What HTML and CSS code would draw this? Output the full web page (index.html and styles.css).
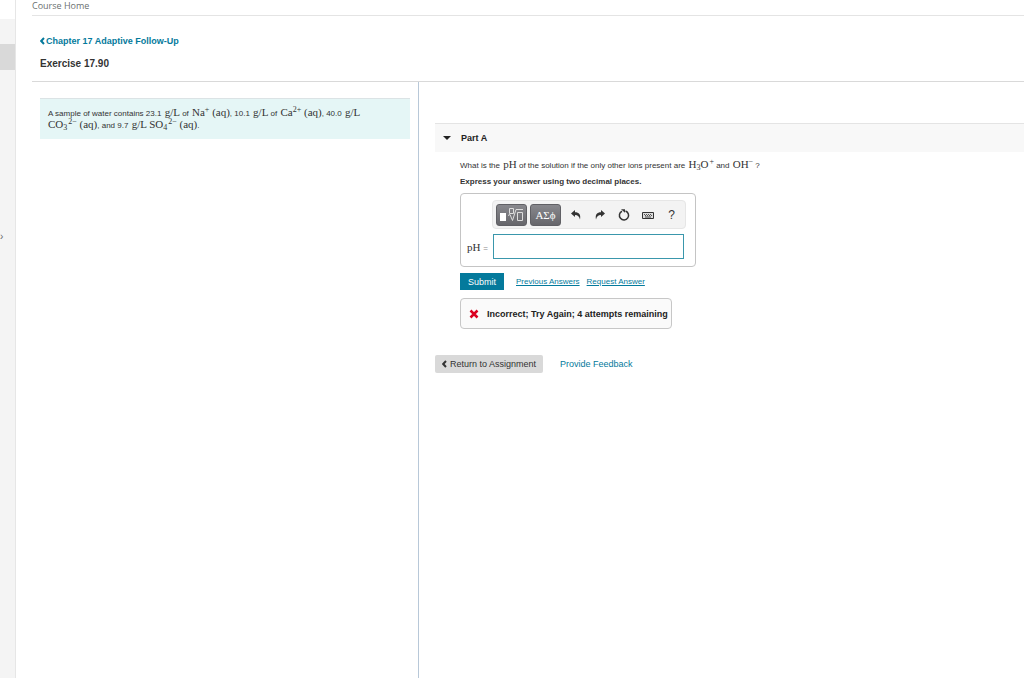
FILE: index.html
```html
<!DOCTYPE html>
<html lang="en">
<head>
<meta charset="utf-8">
<title>Exercise 17.90</title>
<link rel="stylesheet" href="styles.css">
</head>
<body>
<aside class="rail"><div class="rail-top"></div><div class="rail-active"></div><span class="rail-mark">›</span></aside>
<main class="page">
  <nav class="crumbs"><a href="#">Course Home</a></nav>
  <header class="heading">
    <a class="back" href="#"><svg class="chevron" viewBox="0 0 5 8"><path d="M4 1 1.2 4 4 7"/></svg>Chapter 17 Adaptive Follow-Up</a>
    <h1>Exercise 17.90</h1>
  </header>
  <div class="columns">
    <section class="problem">
      <p class="intro">A sample of water contains 23.1 <span class="math">g/L</span> of <span class="math">Na<sup>+</sup> (aq)</span>, 10.1 <span class="math">g/L</span> of <span class="math">Ca<sup>2+</sup> (aq)</span>, 40.0 <span class="math">g/L</span><br><span class="math">CO<sub>3</sub><sup>2−</sup> (aq)</span>, and 9.7 <span class="math">g/L SO<sub>4</sub><sup>2−</sup> (aq)</span>.</p>
    </section>
    <section class="work">
      <h2 class="part"><svg class="caret" viewBox="0 0 8 4"><path d="M0 0h8L4 4z"/></svg>Part A</h2>
      <div class="question">
        <p class="ask">What is the <span class="math">pH</span> of the solution if the only other ions present are <span class="math">H<sub>3</sub>O<sup>+</sup></span> and <span class="math">OH<sup>−</sup></span> ?</p>
        <p class="express">Express your answer using two decimal places.</p>
        <div class="answer">
          <div class="toolbar">
            <button class="dark" aria-label="Templates"><svg width="25" height="18" viewBox="0 0 25 18"><path fill="#fff" d="M1 7h6v8H1z"/><g fill="none" stroke="#ddd"><path d="M10.5 2.5h4v5h-4zM18.5 6.5h5v8h-5zM9 9.5l2-1 2.500 6L17 3.500h7"/></g></svg></button>
            <button class="dark greek">ΑΣϕ</button>
            <button class="tool" aria-label="Undo"><svg viewBox="0 0 12 12"><path class="solid" d="M1 4.500 5 1v2.200c4 0 6 2.200 5 7.300C9.300 7.500 8 6 5 6v2z"/></svg></button>
            <button class="tool" aria-label="Redo"><svg viewBox="0 0 12 12"><path class="solid" d="M11 4.500 7 1v2.200c-4 0-6 2.200-5 7.300C2.700 7.500 4 6 7 6v2z"/></svg></button>
            <button class="tool" aria-label="Reset"><svg viewBox="0 0 12 12"><path class="line" d="M7.500 2A4.600 4.600 0 1 1 4 2.200"/><path class="solid" d="M3 .2h4v3.600z"/></svg></button>
            <button class="tool" aria-label="Keyboard"><svg viewBox="0 0 12 12"><path fill="#ddd" stroke="#333" d="M.5 3.500h11v6H.5z"/><path fill="none" stroke="#555" stroke-dasharray="1 1" d="M2 5.500h8M3 6.500h7"/><path stroke="#444" d="M3 8h6"/></svg></button>
            <button class="tool help" aria-label="Help">?</button>
          </div>
          <div class="entry"><label class="math" for="ph">pH <span class="eq">=</span></label><input id="ph" type="text"></div>
        </div>
        <div class="actions"><button class="submit">Submit</button><a href="#">Previous Answers</a><a href="#">Request Answer</a></div>
        <div class="result"><svg viewBox="0 0 10 10"><path d="M1.500 1.500l7 7M8.500 1.500l-7 7"/></svg>Incorrect; Try Again; 4 attempts remaining</div>
      </div>
      <footer class="foot"><button class="return"><svg class="chevron" viewBox="0 0 5 8"><path d="M4 1 1.200 4 4 7"/></svg>Return to Assignment</button><a href="#">Provide Feedback</a></footer>
    </section>
  </div>
</main>
</body>
</html>
```
FILE: styles.css
```css
* { box-sizing: border-box; }
body { margin: 0; min-height: 100vh; display: flex; background: #fff; color: #333; font: 8px/12px "Liberation Sans", Arial, sans-serif; }
a { color: #047a9c; text-decoration: none; }
h1, h2, p { margin: 0; }
button { font: inherit; border: 0; padding: 0; cursor: pointer; }
svg { display: block; }
.rail { flex: 0 0 16px; background: #f4f4f4; border-right: 1px solid #e6e6e6; }
.rail-top { height: 44px; border-top: 19px solid #fff; }
.rail-active { height: 26px; background: #d9d9d9; }
.rail-mark { display: block; margin-top: 161px; height: 12px; font-size: 10px; color: #666; }
.page { flex: 1; min-width: 0; padding-left: 16px; display: flex; flex-direction: column; }
.crumbs { height: 16px; border-bottom: 1px solid #e4e4e4; font: 9px/12px "Open Sans", sans-serif; }
.crumbs a { color: #6a7070; }
.heading { height: 66px; padding: 19px 8px 0; border-bottom: 1px solid #d9d9d9; }
.back { display: flex; align-items: center; gap: 1px; font-weight: bold; font-size: 9px; }
.chevron { width: 5px; height: 8px; fill: none; stroke: currentColor; stroke-width: 2; }
h1 { margin-top: 11px; font-size: 10px; line-height: 12px; }
.columns { flex: 1; display: flex; }
.problem { flex: 0 0 387px; padding: 16px 8px; border-right: 1px solid #b8c8d8; }
.intro { padding: 9px 8px 7px; min-height: 41px; background: #e5f6f6; border-top: 1px solid #dbe3e5; white-space: nowrap; }
.math { font-family: "Liberation Serif", "Times New Roman", serif; font-size: 11px; line-height: 0; }
.intro .math, .ask .math { margin-left: 1px; }
.intro br + .math { margin-left: 0; }
sub, sup { font-size: 8px; line-height: 0; vertical-align: baseline; position: relative; }
sup { top: -4px; }
sub { top: 2px; }
sub + sup { margin-left: 1px; }
.work { flex: 1; min-width: 0; padding: 41px 0 0 16px; }
.part { height: 29px; padding-left: 8px; display: flex; align-items: center; gap: 10px; background: #f8f8f8; border-top: 1px solid #e4e4e4; font-size: 9px; color: #222; }
.caret { width: 8px; height: 4px; fill: #222; }
.question { padding: 8px 0 0 25px; }
.express { margin-top: 4px; font-weight: bold; }
.answer { max-width: 236px; margin-top: 5px; padding: 6px 9px 7px 6px; border: 1px solid #c4c4c4; border-radius: 4px; }
.toolbar { height: 29px; margin-left: 25px; padding: 0 3px; display: flex; align-items: center; gap: 3px; background: #f3f3f3; border: 1px solid #e6e6e6; border-radius: 4px; }
.dark { width: 31px; height: 22px; display: flex; align-items: center; justify-content: center; border: 1px solid #606065; border-radius: 3px; background: linear-gradient(#88888d, #66666b); color: #fff; }
.greek { font: 11px/18px "Liberation Serif", serif; }
.tool { width: 21px; height: 20px; display: flex; align-items: center; justify-content: center; background: none; color: #333; }
.greek + .tool { margin-left: 1px; }
.tool svg { width: 12px; height: 12px; }
.solid { fill: #333; }
.line { fill: none; stroke: #333; stroke-width: 1.5; }
.help { font-size: 12px; }
.entry { margin-top: 5px; padding-right: 2px; display: flex; align-items: center; }
.entry label { width: 26px; line-height: 12px; }
.eq { font: 8px "Liberation Sans", sans-serif; color: #888; }
.entry input { flex: 1; min-width: 0; height: 25px; padding: 0 4px; border: 1px solid #3a97ac; font: 11px "Liberation Serif", serif; }
.actions { margin-top: 6px; display: flex; align-items: center; font-size: 8px; }
.submit { width: 44px; height: 17px; margin-right: 12px; background: #047a9c; color: #fff; font-size: 9px; }
.actions a { margin-right: 7px; text-decoration: underline; }
.result { width: 212px; height: 31px; margin-top: 8px; padding-left: 8px; display: flex; align-items: center; gap: 8px; background: #fafafa; border: 1px solid #c7c7c7; border-radius: 4px; font-size: 9px; font-weight: bold; color: #222; white-space: nowrap; }
.result svg { width: 10px; height: 10px; stroke: #db0020; stroke-width: 2.5; }
.foot { margin-top: 26px; display: flex; align-items: center; gap: 17px; font-size: 9px; }
.return { width: 108px; height: 18px; display: flex; align-items: center; justify-content: center; gap: 3px; background: #d9d9d9; border-radius: 2px; color: #333; }
```
